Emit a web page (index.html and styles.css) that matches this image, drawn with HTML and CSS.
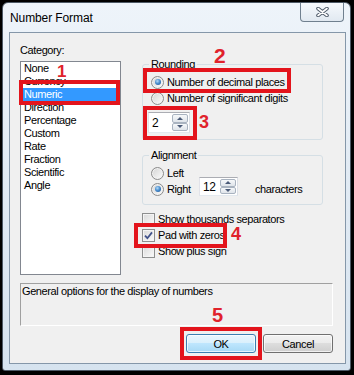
FILE: index.html
```html
<!DOCTYPE html>
<html lang="en">
<head>
    <meta charset="UTF-8">
    <meta name="viewport" content="width=device-width, initial-scale=1.0">
    <title>Number Format</title>
    <link rel="stylesheet" href="styles.css">
</head>
<body>
    <div class="screen">
        <div class="window">
            <div class="titlebar">
                <span class="title">Number Format</span>
                <button class="close" aria-label="Close">
                    <svg width="13" height="10" viewBox="0 0 13 10">
                        <path d="M2 1.5 L11 8.5 M11 1.5 L2 8.5" stroke="#505c6b" stroke-width="3.6" stroke-linecap="round"/>
                        <path d="M2 1.5 L11 8.5 M11 1.5 L2 8.5" stroke="#fff" stroke-width="1.6" stroke-linecap="round"/>
                    </svg>
                </button>
            </div>

            <div class="client">
                <div class="main">
                    <div class="category">
                        <div class="label">Category:</div>
                        <ul class="listbox">
                            <li>None</li>
                            <li>Currency</li>
                            <li class="selected">Numeric</li>
                            <li>Direction</li>
                            <li>Percentage</li>
                            <li>Custom</li>
                            <li>Rate</li>
                            <li>Fraction</li>
                            <li>Scientific</li>
                            <li>Angle</li>
                        </ul>
                    </div>

                    <div class="options">
                        <fieldset class="group rounding">
                            <legend>Rounding</legend>
                            <div class="option"><span class="radio checked"></span>Number of decimal places</div>
                            <div class="option"><span class="radio"></span>Number of significant digits</div>
                            <div class="spin spin-digits">
                                <span class="spin-value">2</span>
                                <span class="spin-btns"><span class="spin-btn up"></span><span class="spin-btn down"></span></span>
                            </div>
                        </fieldset>

                        <fieldset class="group alignment">
                            <legend>Alignment</legend>
                            <div class="option"><span class="radio"></span>Left</div>
                            <div class="align-row">
                                <div class="option align-right"><span class="radio checked"></span>Right</div>
                                <div class="spin spin-width">
                                    <span class="spin-value">12</span>
                                    <span class="spin-btns"><span class="spin-btn up"></span><span class="spin-btn down"></span></span>
                                </div>
                                <span class="chars">characters</span>
                            </div>
                        </fieldset>

                        <div class="checks">
                            <div class="option"><span class="check"></span>Show thousands separators</div>
                            <div class="option">
                                <span class="check checked">
                                    <svg width="9" height="9" viewBox="0 0 9 9"><path d="M1 4.6 L3.4 7.2 L8 1.4" fill="none" stroke="#41528a" stroke-width="1.8"/></svg>
                                </span>Pad with zeros
                            </div>
                            <div class="option"><span class="check"></span>Show plus sign</div>
                        </div>
                    </div>
                </div>

                <div class="description">General options for the display of numbers</div>

                <div class="buttons">
                    <button class="btn default">OK</button>
                    <button class="btn">Cancel</button>
                </div>
            </div>
        </div>

        <!-- annotation marks -->
        <div class="mark mark-1"></div>
        <div class="mark mark-2"></div>
        <div class="mark mark-3"></div>
        <div class="mark mark-4"></div>
        <div class="mark mark-5"></div>
        <span class="tag tag-1">1</span>
        <span class="tag tag-2">2</span>
        <span class="tag tag-3">3</span>
        <span class="tag tag-4">4</span>
        <span class="tag tag-5">5</span>
    </div>
</body>
</html>
```

FILE: styles.css
```css
* {
    margin: 0;
    padding: 0;
    box-sizing: border-box;
}

body {
    background-color: #000;
    font-family: "Liberation Sans", Arial, sans-serif;
    font-size: 11px;
    letter-spacing: -0.4px;
    color: #000;
}

.screen {
    position: relative;
    width: 354px;
    height: 375px;
    padding: 2px 3px 4px 2px;
    background-color: #000;
}

.window {
    height: 369px;
    display: flex;
    flex-direction: column;
    border: 1px solid #4d5966;
    border-radius: 6px 6px 3px 3px;
    background: linear-gradient(180deg, #eef4fa 0%, #e2ebf4 45%, #d6e3ef 100%);
}

/* title bar */
.titlebar {
    height: 29px;
    display: flex;
    justify-content: space-between;
    align-items: flex-start;
    padding-left: 7px;
}

.title {
    padding-top: 8px;
    font-size: 12px;
    line-height: 15px;
    letter-spacing: -0.1px;
}

.close {
    width: 44px;
    height: 19px;
    margin-right: 6px;
    display: flex;
    justify-content: center;
    align-items: center;
    border: 1px solid #70808f;
    border-top: none;
    border-radius: 0 0 4px 4px;
    background: linear-gradient(180deg, #f6f9fc, #e1e9f1);
}

/* client area */
.client {
    height: 332px;
    margin: 0 4px 0 6px;
    display: flex;
    flex-direction: column;
    border: 1px solid #8597a9;
    background-color: #f0f0f0;
}

.main {
    display: flex;
    height: 242px;
}

.category {
    width: 101px;
    margin-left: 10px;
    padding-top: 11px;
}

.label {
    line-height: 13px;
    margin-bottom: 4px;
}

.listbox {
    list-style: none;
    height: 214px;
    border: 1px solid #828790;
    background-color: #fff;
}

.listbox li {
    line-height: 13px;
    padding-left: 2px;
    margin: 0 1px;
}

.listbox li.selected {
    background-color: #3399ff;
    color: #fff;
}

.options {
    width: 181px;
    margin-left: 21px;
    padding-top: 25px;
}

.group {
    min-width: 0;
    padding: 3px 8px 6px;
    border: 1px solid #d5dfe5;
    border-radius: 3px;
}

.group legend {
    padding: 0 2px;
    margin-left: -2px;
    line-height: 13px;
}

.alignment {
    margin-top: 9px;
    padding-bottom: 7px;
}

.option {
    display: flex;
    align-items: center;
    height: 16px;
    white-space: nowrap;
}

.radio {
    width: 13px;
    height: 13px;
    margin-right: 3px;
    flex-shrink: 0;
    display: flex;
    justify-content: center;
    align-items: center;
    border: 1px solid #8b8b8b;
    border-radius: 50%;
    background: linear-gradient(135deg, #d3d3d3, #fdfdfd);
    box-shadow: inset 0 0 0 1px #f2f2f2;
}

.radio.checked::after {
    content: "";
    width: 6px;
    height: 6px;
    border-radius: 50%;
    background: radial-gradient(circle at 40% 35%, #b6dcf7 0%, #4b8fd0 45%, #1a4f8c 100%);
}

.check {
    width: 13px;
    height: 13px;
    margin-right: 3px;
    flex-shrink: 0;
    display: flex;
    justify-content: center;
    align-items: center;
    border: 1px solid #8e8f8f;
    background: linear-gradient(135deg, #d9d9d9, #fbfbfb);
    box-shadow: inset 0 0 0 1px #f4f4f4;
}

/* spin boxes */
.spin {
    display: flex;
    border: 1px solid #abadb3;
    border-color: #abadb3 #dbdfe6 #e3e9ef #e2e3ea;
    background-color: #fff;
}

.spin-value {
    flex: 1;
    padding-left: 3px;
    display: flex;
    align-items: center;
    font-size: 12px;
}

.spin-btns {
    width: 17px;
    display: flex;
    flex-direction: column;
    padding: 1px 1px 1px 0;
}

.spin-btn {
    flex: 1;
    display: flex;
    justify-content: center;
    align-items: center;
    border: 1px solid #a9b3c0;
    border-radius: 2px;
    background: linear-gradient(180deg, #f6f8fa, #dfe4ea);
}

.spin-btn.up::after {
    content: "";
    border-left: 3px solid transparent;
    border-right: 3px solid transparent;
    border-bottom: 3px solid #4b5b78;
}

.spin-btn.down::after {
    content: "";
    border-left: 3px solid transparent;
    border-right: 3px solid transparent;
    border-top: 3px solid #4b5b78;
}

.spin-digits {
    width: 42px;
    height: 21px;
    margin: 6px 0 0 -3px;
}

.align-row {
    display: flex;
    align-items: flex-start;
}

.align-right {
    width: 48px;
}

.spin-width {
    width: 39px;
    height: 19px;
    margin-top: -4px;
}

.chars {
    margin-left: 17px;
    line-height: 16px;
}

.checks {
    margin-top: 6px;
}

/* description + buttons */
.description {
    height: 43px;
    margin: 8px 12px 0 10px;
    padding: 1px 1px;
    line-height: 13px;
    border: 1px solid;
    border-color: #a0a0a0 #fff #fff #a0a0a0;
}

.buttons {
    display: flex;
    justify-content: flex-end;
    gap: 7px;
    margin-top: 8px;
    padding-right: 12px;
}

.btn {
    width: 70px;
    height: 19px;
    font: inherit;
    letter-spacing: -0.4px;
    border: 1px solid #707070;
    border-radius: 3px;
    background: linear-gradient(180deg, #f2f2f2 0%, #ebebeb 49%, #dddddd 50%, #cfcfcf 100%);
    box-shadow: inset 0 0 0 1px rgba(255, 255, 255, 0.7);
}

.btn.default {
    border-color: #3c7fb1;
    background: linear-gradient(180deg, #eaf6fd 0%, #d9f0fc 49%, #bee6fd 50%, #a7d9f5 100%);
}

/* red annotation marks */
.mark {
    position: absolute;
    border: 4px solid #e3141c;
}

.mark-1 { left: 19px; top: 80px; width: 101px; height: 25px; }
.mark-2 { left: 143px; top: 68px; width: 148px; height: 25px; }
.mark-3 { left: 143px; top: 106px; width: 54px; height: 34px; }
.mark-4 { left: 134px; top: 223px; width: 93px; height: 25px; }
.mark-5 { left: 180px; top: 327px; width: 82px; height: 33px; }

.tag {
    position: absolute;
    color: #e0222b;
    font-weight: bold;
    line-height: 1;
    letter-spacing: 0;
}

.tag-1 { left: 57px; top: 63px; font-size: 17px; }
.tag-2 { left: 214px; top: 45px; font-size: 21px; }
.tag-3 { left: 199px; top: 113px; font-size: 18px; }
.tag-4 { left: 231px; top: 225px; font-size: 18px; }
.tag-5 { left: 212px; top: 305px; font-size: 20px; }
```
